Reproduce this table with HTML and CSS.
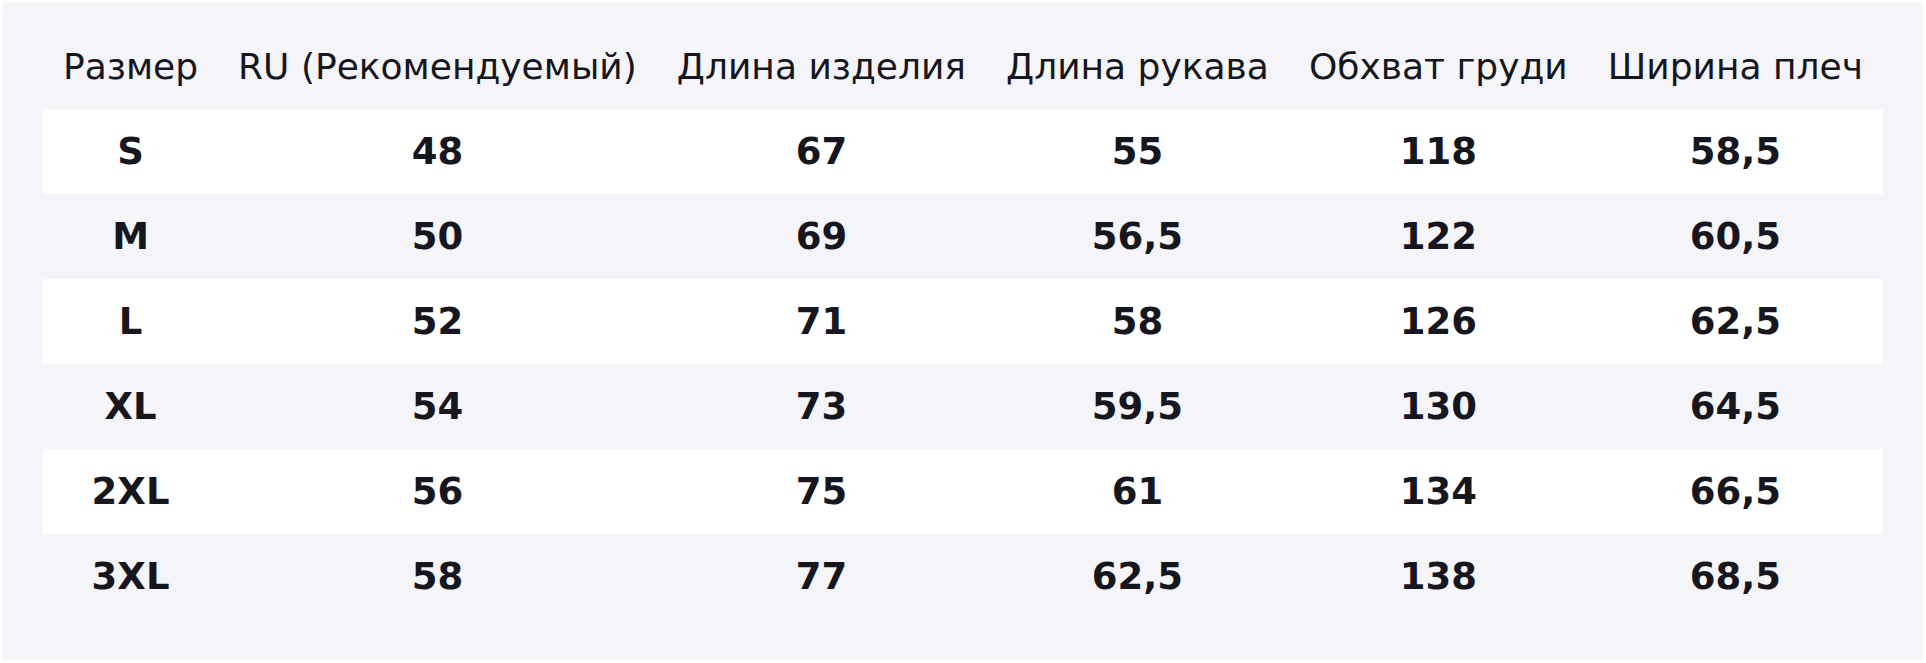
FILE: index.html
```html
<!DOCTYPE html>
<html lang="ru">
<head>
<meta charset="utf-8">
<title>Таблица размеров</title>
<link rel="stylesheet" href="styles.css">
</head>
<body>
<div class="panel">
  <table class="sizes">
    <thead>
      <tr>
        <th>Размер</th>
        <th>RU (Рекомендуемый)</th>
        <th>Длина изделия</th>
        <th>Длина рукава</th>
        <th>Обхват груди</th>
        <th>Ширина плеч</th>
      </tr>
    </thead>
    <tbody>
      <tr><td>S</td><td>48</td><td>67</td><td>55</td><td>118</td><td>58,5</td></tr>
      <tr><td>M</td><td>50</td><td>69</td><td>56,5</td><td>122</td><td>60,5</td></tr>
      <tr><td>L</td><td>52</td><td>71</td><td>58</td><td>126</td><td>62,5</td></tr>
      <tr><td>XL</td><td>54</td><td>73</td><td>59,5</td><td>130</td><td>64,5</td></tr>
      <tr><td>2XL</td><td>56</td><td>75</td><td>61</td><td>134</td><td>66,5</td></tr>
      <tr><td>3XL</td><td>58</td><td>77</td><td>62,5</td><td>138</td><td>68,5</td></tr>
    </tbody>
  </table>
</div>
</body>
</html>
```
FILE: styles.css
```css
html, body {
  margin: 0;
  background: #ffffff;
}
body {
  padding: 3px;
  font-family: "DejaVu Sans", "Liberation Sans", sans-serif;
  color: #16161e;
}
.panel {
  width: 1920px;
  height: 657px;
  box-sizing: border-box;
  background: #f4f4f9;
  padding: 40px;
}
.sizes {
  width: 100%;
  border-collapse: collapse;
}
.sizes th {
  font-size: 36px;
  font-weight: normal;
  text-align: center;
  white-space: nowrap;
  padding: 3px 20px 22px;
}
.sizes td {
  font-size: 37px;
  font-weight: bold;
  text-align: center;
  white-space: nowrap;
  padding: 0 20px;
  height: 85px;
}
.sizes tbody tr:nth-child(odd) {
  background: #ffffff;
}
```
